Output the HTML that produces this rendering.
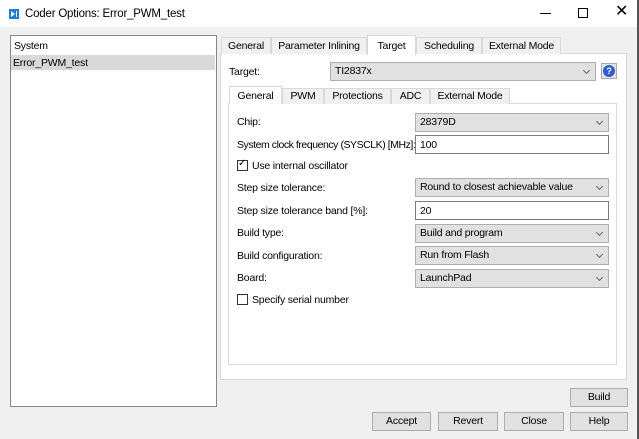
<!DOCTYPE html><html><head><style>
*{box-sizing:border-box;margin:0;padding:0}
body{width:639px;height:439px;background:#f0f0f0;font-family:"Liberation Sans",sans-serif;font-size:10.5px;letter-spacing:-0.2px;color:#000;position:relative;overflow:hidden}
.a{position:absolute}
.t{position:absolute;white-space:nowrap;line-height:14px}
.tab{position:absolute;border:1px solid #d9d9d9;border-bottom:none;background:#f0f0f0;text-align:center;line-height:16px;white-space:nowrap}
.tab.on{background:#fff}
.cb{position:absolute;background:#e1e1e1;border:1px solid #adadad;padding-left:4px;line-height:17px}
.cb:after{content:"";position:absolute;right:6px;top:5px;width:4px;height:4px;border-right:1px solid #666;border-bottom:1px solid #666;transform:rotate(45deg)}
.in{position:absolute;background:#fff;border:1px solid #7a7a7a;padding-left:4px;padding-top:1px;line-height:16px}
.btn{position:absolute;background:#e1e1e1;border:1px solid #adadad;text-align:center;line-height:17px}
.chk{position:absolute;width:11px;height:11px;border:1px solid #333;background:#fff}
</style></head><body>
<div class="a" style="left:0;top:0;width:637px;height:27px;background:#fff"></div>
<div class="a" style="left:637px;top:0;width:2px;height:439px;background:#555"></div>
<div class="a" style="left:9px;top:9px;width:10px;height:10px;background:#1c7fd0"></div>
<div class="a" style="left:11px;top:11px;width:0;height:0;border-left:4px solid #fff;border-top:3px solid transparent;border-bottom:3px solid transparent"></div>
<div class="a" style="left:16px;top:11px;width:1px;height:6px;background:#fff"></div>
<div class="t" style="left:25px;top:7px;font-size:11.5px">Coder Options: Error_PWM_test</div>
<div class="a" style="left:540px;top:13px;width:11px;height:1px;background:#000"></div>
<div class="a" style="left:578px;top:8px;width:10px;height:10px;border:1px solid #000"></div>
<div class="t" style="left:615px;top:5px;font-size:16px">✕</div>

<div class="a" style="left:10px;top:35px;width:207px;height:372px;background:#fff;border:1px solid #828790"></div>
<div class="t" style="left:14px;top:39px">System</div>
<div class="a" style="left:11px;top:55px;width:204px;height:15px;background:#d9d9d9"></div>
<div class="t" style="left:13px;top:56px">Error_PWM_test</div>

<div class="a" style="left:220px;top:53px;width:407px;height:327px;background:#fff;border:1px solid #d9d9d9"></div>
<div class="tab" style="left:221px;top:37px;width:50px;height:17px">General</div>
<div class="tab" style="left:271px;top:37px;width:96px;height:17px">Parameter Inlining</div>
<div class="tab on" style="left:367px;top:35px;width:49px;height:20px;line-height:20px">Target</div>
<div class="tab" style="left:416px;top:37px;width:66px;height:17px">Scheduling</div>
<div class="tab" style="left:482px;top:37px;width:79px;height:17px">External Mode</div>

<div class="t" style="left:229px;top:65px">Target:</div>
<div class="cb" style="left:330px;top:62px;width:266px;height:19px">TI2837x</div>
<div class="a" style="left:601px;top:63px;width:16px;height:16px;background:#e4e4e4;border:1px solid #aaa"></div>
<div class="a" style="left:603px;top:65px;width:12px;height:12px;border-radius:50%;background:#2f5fc8;color:#fff;font-size:9px;font-weight:bold;text-align:center;line-height:12px">?</div>

<div class="a" style="left:228px;top:103px;width:389px;height:262px;background:#fff;border:1px solid #d9d9d9"></div>
<div class="tab on" style="left:229px;top:86px;width:53px;height:18px;line-height:18px">General</div>
<div class="tab" style="left:282px;top:88px;width:42px;height:16px;line-height:15px">PWM</div>
<div class="tab" style="left:324px;top:88px;width:67px;height:16px;line-height:15px">Protections</div>
<div class="tab" style="left:391px;top:88px;width:39px;height:16px;line-height:15px">ADC</div>
<div class="tab" style="left:430px;top:88px;width:80px;height:16px;line-height:15px">External Mode</div>

<div class="t" style="left:237px;top:115px">Chip:</div>
<div class="cb" style="left:415px;top:113px;width:194px;height:19px">28379D</div>
<div class="t" style="left:237px;top:138px;letter-spacing:-0.45px">System clock frequency (SYSCLK) [MHz]:</div>
<div class="in" style="left:415px;top:135px;width:194px;height:19px">100</div>
<div class="chk" style="left:237px;top:160px"></div>
<div class="t" style="left:238px;top:157px;font-size:10px">✓</div>
<div class="t" style="left:252px;top:159px">Use internal oscillator</div>
<div class="t" style="left:237px;top:181px">Step size tolerance:</div>
<div class="cb" style="left:415px;top:178px;width:194px;height:19px">Round to closest achievable value</div>
<div class="t" style="left:237px;top:204px">Step size tolerance band [%]:</div>
<div class="in" style="left:415px;top:201px;width:194px;height:19px">20</div>
<div class="t" style="left:237px;top:226px">Build type:</div>
<div class="cb" style="left:415px;top:224px;width:194px;height:19px">Build and program</div>
<div class="t" style="left:237px;top:249px">Build configuration:</div>
<div class="cb" style="left:415px;top:246px;width:194px;height:19px">Run from Flash</div>
<div class="t" style="left:237px;top:271px">Board:</div>
<div class="cb" style="left:415px;top:269px;width:194px;height:19px">LaunchPad</div>
<div class="chk" style="left:237px;top:294px"></div>
<div class="t" style="left:252px;top:293px">Specify serial number</div>

<div class="btn" style="left:570px;top:388px;width:58px;height:19px">Build</div>
<div class="btn" style="left:372px;top:412px;width:59px;height:19px">Accept</div>
<div class="btn" style="left:438px;top:412px;width:60px;height:19px">Revert</div>
<div class="btn" style="left:504px;top:412px;width:60px;height:19px">Close</div>
<div class="btn" style="left:570px;top:412px;width:58px;height:19px">Help</div>
</body></html>
